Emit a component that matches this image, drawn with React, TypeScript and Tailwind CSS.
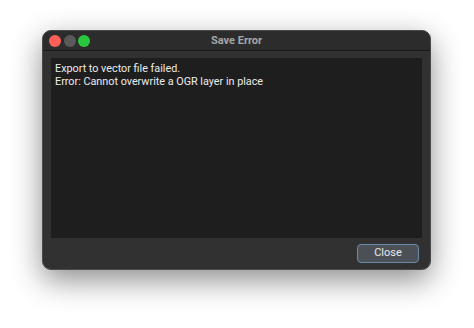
export default function App() {
  return (
    <div
      className="w-[474px] h-[328px] bg-white flex pt-[30px] pl-[42px]"
      style={{ fontFamily: 'Roboto, "Liberation Sans", Arial, sans-serif' }}
    >
      <div className="w-[389px] h-[240px] rounded-[9px] bg-[#313131] border border-[#4a4a4a] shadow-[0_10px_30px_rgba(0,0,0,0.45)] flex flex-col overflow-hidden">
        <div className="relative h-[21px] flex items-center pl-[6px] gap-[2.5px] bg-[#2c2c2c] border-b border-[#1a1a1a]">
          <span className="w-[12px] h-[12px] rounded-full bg-[#fe5f57]" />
          <span className="w-[12px] h-[12px] rounded-full bg-[#5a5a5a]" />
          <span className="w-[12px] h-[12px] rounded-full bg-[#2ac840]" />
          <span className="absolute inset-0 flex items-center justify-center pt-[1px] text-[11px] font-bold text-[#a5a5a5]">
            Save Error
          </span>
        </div>
        <div className="flex-1 flex flex-col px-[8px] pt-[7px] pb-[6px]">
          <div className="h-[180px] bg-[#1e1e1e] px-[4px] pt-[4px] text-[10.8px] leading-[13px] text-[#ececec]">
            <div>Export to vector file failed.</div>
            <div>Error: Cannot overwrite a OGR layer in place</div>
          </div>
          <div className="flex justify-end pt-[6px] pr-[3px]">
            <button className="w-[62px] h-[19px] rounded-[4px] bg-[#4b5056] border border-[#6b8aa8] text-[11px] text-[#e8e8e8] flex items-center justify-center">
              Close
            </button>
          </div>
        </div>
      </div>
    </div>
  );
}
